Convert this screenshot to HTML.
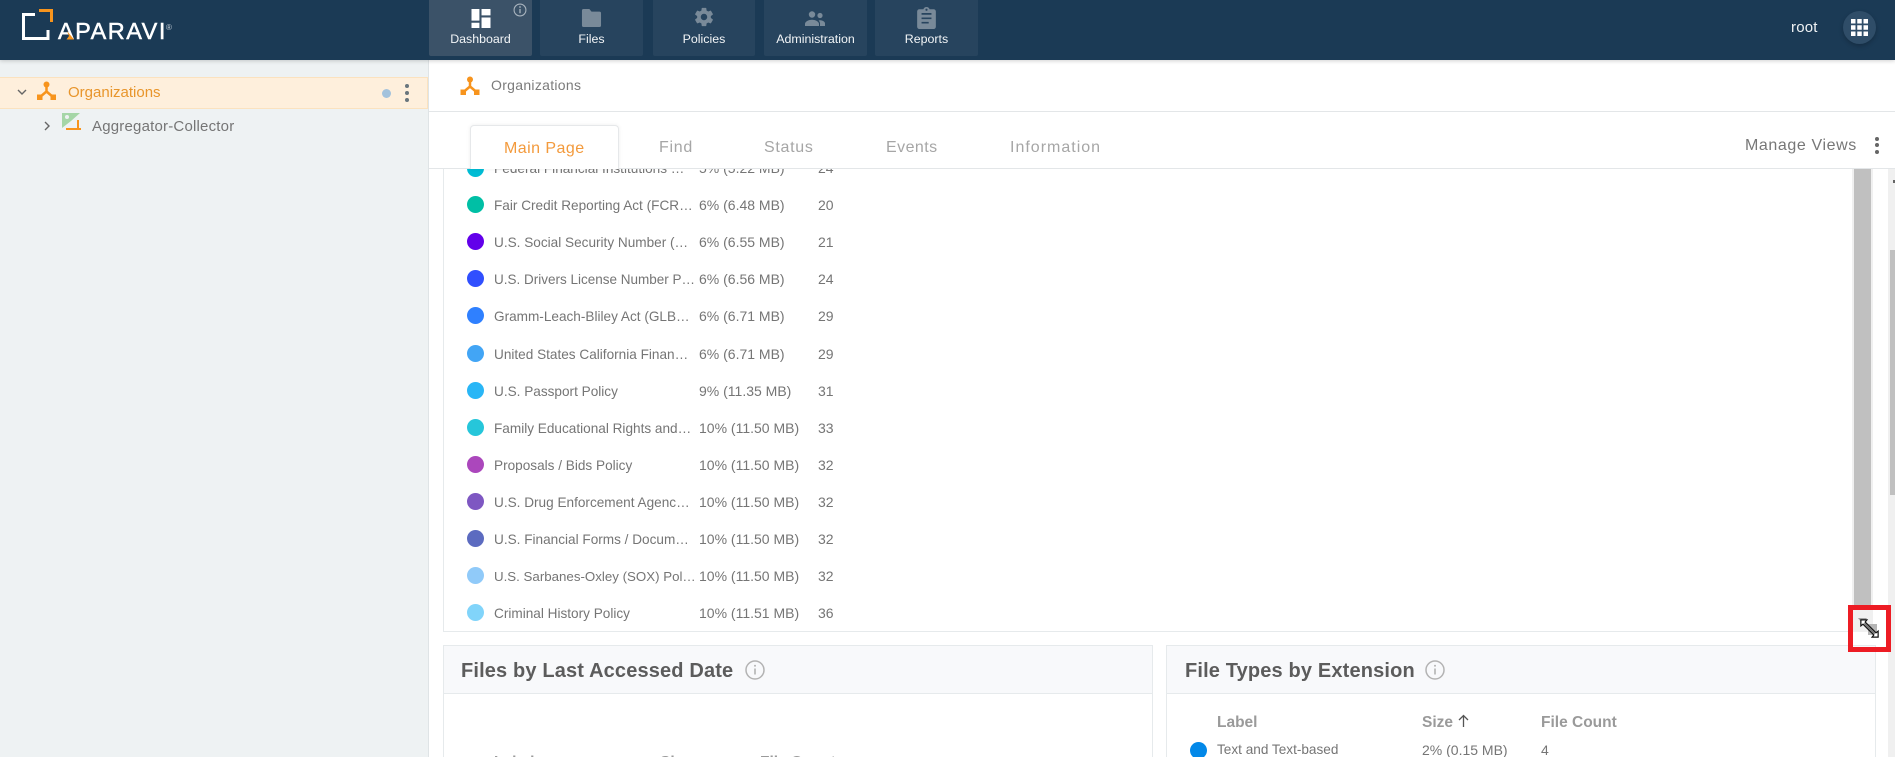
<!DOCTYPE html>
<html><head><meta charset="utf-8"><title>Aparavi</title>
<style>
html,body{margin:0;padding:0;width:1895px;height:757px;overflow:hidden;background:#fff;font-family:"Liberation Sans",sans-serif}
#root{position:relative;width:1895px;height:757px;overflow:hidden;background:#fff}
#root div,#root svg{position:absolute}
.t{white-space:nowrap;height:20px;line-height:20px}
.nav{top:0;height:56px;background:#27445e;border-radius:0 0 2px 2px}
.nl{top:29px;left:0;width:100%;text-align:center;color:#f2f5f7;font-size:12.4px;line-height:20px}
.r{font-size:14px;color:#757575}
.l{font-size:13.6px;margin-top:1px}
.dot{left:466.5px;width:17px;height:17px;border-radius:50%}
.tab{font-size:16px;color:#a6a6a6;letter-spacing:.7px}
.card{background:#fff;border:1px solid #e6eaec;box-sizing:border-box}
.ch{left:0;top:0;right:0;height:47px;background:#f8f9fb;border-bottom:1px solid #e6eaec}
.ct{font-size:20px;font-weight:bold;color:#5c5c5c;letter-spacing:.15px}
.th{font-size:15.5px;font-weight:bold;color:#9a9a9a}
</style></head><body><div id="root">

<!-- Sidebar -->
<div style="left:0;top:60px;width:428px;height:697px;background:#eef2f3;border-right:1px solid #dfe4e6"></div>
<div style="left:0;top:77px;width:428px;height:32px;box-sizing:border-box;background:#feefdc;border-top:1px solid #fbe2bf;border-bottom:1px solid #fbe2bf;border-right:1px solid #fbe2bf"></div>
<svg style="left:16px;top:88px" width="12" height="9" viewBox="0 0 12 9"><path d="M2 2l4 4 4-4" fill="none" stroke="#666" stroke-width="1.4"/></svg>
<svg style="left:37px;top:81px" width="20" height="20" viewBox="0 0 20 20"><circle cx="9.500" cy="3.500" r="3" fill="#f7941d"/><path d="M9.500 5v5.500L3 16M9.500 10.500L16 16" fill="none" stroke="#f7941d" stroke-width="2.500"/><rect x="0" y="13.500" width="5.500" height="5.500" fill="#f7941d"/><rect x="13.500" y="13.500" width="5.500" height="5.500" fill="#f7941d"/></svg>
<div class="t" style="left:68px;top:83px;font-size:15px;color:#e8952b">Organizations</div>
<div style="left:382px;top:89px;width:9px;height:9px;border-radius:50%;background:#a3c2dc"></div>
<div style="left:405px;top:84px;width:4px;height:4px;border-radius:50%;background:#69757d"></div>
<div style="left:405px;top:91px;width:4px;height:4px;border-radius:50%;background:#69757d"></div>
<div style="left:405px;top:98px;width:4px;height:4px;border-radius:50%;background:#69757d"></div>
<svg style="left:43px;top:120px" width="9" height="12" viewBox="0 0 9 12"><path d="M2 2l4 4-4 4" fill="none" stroke="#666" stroke-width="1.4"/></svg>
<svg style="left:62px;top:112px" width="20" height="19" viewBox="0 0 20 19"><path d="M0 1h18L9 9 0 16z" fill="#a5d6a7"/><circle cx="5" cy="5" r="2" fill="#eef2f3"/><path d="M4 17h15M16 8v9" stroke="#f7941d" stroke-width="2" fill="none"/></svg>
<div class="t" style="left:92px;top:117px;font-size:15px;color:#757575;letter-spacing:.2px">Aggregator-Collector</div>

<!-- Header -->
<div style="left:0;top:0;width:1895px;height:60px;background:#1b3a55;box-shadow:0 1px 4px rgba(0,0,0,.18)"></div>
<svg style="left:20px;top:8px" width="36" height="34" viewBox="0 0 36 34"><path d="M15 6.500H3.500V30.500H28V22" fill="none" stroke="#fff" stroke-width="3"/><path d="M19 2.500H31.500V14" fill="none" stroke="#f7941d" stroke-width="3"/></svg>
<div class="t" style="left:58px;top:19px;height:24px;line-height:24px;font-size:23.5px;color:#fff;letter-spacing:1.5px;-webkit-text-stroke:.5px #fff">APARAVI</div>
<svg style="left:58px;top:26px" width="20" height="16" viewBox="0 0 20 16"><path d="M9 5L16 13.500H8.500L11 10z" fill="#f7941d"/></svg>
<div class="t" style="left:166px;top:22px;font-size:8px;color:#c9d2da;line-height:12px;height:12px">®</div>

<div class="nav" style="left:429px;width:103px;background:#3b5268"><div class="nl">Dashboard</div></div>
<svg style="left:471px;top:9px" width="20" height="19" viewBox="0 0 18 18"><path d="M0 0h7.500v11H0zM0 13h7.500v5H0zM9.500 0H18v6H9.500zM9.500 8H18v10H9.500z" fill="#fff"/></svg>
<svg style="left:513px;top:3px" width="14" height="14" viewBox="0 0 13 13"><circle cx="6.500" cy="6.500" r="5.500" fill="none" stroke="#aab5bf" stroke-width="1"/><path d="M6.500 5.500v4" stroke="#aab5bf" stroke-width="1.200"/><circle cx="6.500" cy="3.700" r=".8" fill="#aab5bf"/></svg>

<div class="nav" style="left:540px;width:103px"><div class="nl">Files</div></div>
<svg style="left:581px;top:9px" width="21" height="18" viewBox="0 0 18 17"><path d="M1.500 0H7l2 2.500h7.500A1.500 1.500 0 0 1 18 4v11.500a1.500 1.500 0 0 1-1.500 1.500h-15A1.500 1.500 0 0 1 0 15.500V1.500A1.500 1.500 0 0 1 1.500 0z" fill="#798a99"/></svg>

<div class="nav" style="left:653px;width:102px"><div class="nl">Policies</div></div>
<svg style="left:693px;top:6px" width="22" height="22" viewBox="0 0 24 24"><path fill="#798a99" d="M19.430 12.980c.04-.32.07-.64.07-.98s-.03-.66-.07-.98l2.110-1.650c.19-.15.24-.42.12-.64l-2-3.460c-.12-.22-.39-.3-.61-.22l-2.490 1c-.52-.4-1.080-.73-1.690-.98l-.38-2.650C14.460 2.180 14.250 2 14 2h-4c-.25 0-.46.18-.49.420l-.38 2.650c-.61.25-1.170.59-1.690.98l-2.490-1c-.23-.09-.49 0-.61.22l-2 3.460c-.13.220-.07.490.12.640l2.110 1.650c-.04.320-.07.650-.07.980s.03.660.07.980l-2.110 1.650c-.19.150-.24.420-.12.640l2 3.460c.12.220.39.300.61.220l2.490-1c.52.400 1.080.730 1.690.980l.38 2.650c.03.240.24.420.49.420h4c.25 0 .46-.18.49-.42l.38-2.650c.61-.25 1.170-.59 1.690-.98l2.490 1c.23.090.49 0 .61-.22l2-3.460c.12-.22.07-.49-.12-.64l-2.110-1.650zM12 15.500c-1.930 0-3.500-1.570-3.500-3.500s1.570-3.500 3.500-3.500 3.500 1.570 3.500 3.500-1.570 3.500-3.500 3.500z"/></svg>

<div class="nav" style="left:764px;width:103px"><div class="nl">Administration</div></div>
<svg style="left:804px;top:11px" width="22" height="15" viewBox="0 0 20 15"><circle cx="7" cy="3.500" r="3.200" fill="#798a99"/><circle cx="15" cy="4.500" r="2.600" fill="#798a99"/><path d="M0 15v-2c0-2.500 4-4.200 7-4.200s7 1.700 7 4.200v2zM15 15v-2.500c0-1.300-.6-2.300-1.500-3 .5-.1 1-.2 1.500-.2 2.300 0 5 1.300 5 3.200V15z" fill="#798a99"/></svg>

<div class="nav" style="left:875px;width:103px"><div class="nl">Reports</div></div>
<svg style="left:917px;top:7px" width="19" height="22" viewBox="0 0 17 20"><path fill="#798a99" fill-rule="evenodd" d="M2 2h3.700C6 .9 7.100 0 8.500 0s2.500.9 2.800 2H15a2 2 0 0 1 2 2v14a2 2 0 0 1-2 2H2a2 2 0 0 1-2-2V4a2 2 0 0 1 2-2zM7.500 2.500a1 1 0 1 0 2 0 1 1 0 0 0-2 0zM4 7h9V5.500H4zM4 11h9V9.500H4zM4 15h6.500v-1.500H4z"/></svg>

<div class="t" style="left:1791px;top:18px;font-size:15px;color:#f0f3f5;letter-spacing:.2px">root</div>
<div style="left:1843px;top:11px;width:33px;height:33px;border-radius:50%;background:#2f4d68;box-shadow:0 2px 5px rgba(0,0,0,.22)"></div>
<svg style="left:1851px;top:19px" width="17" height="17" viewBox="0 0 17 17"><path fill="#fff" d="M0 0h4.500v4.500H0zM6.250 0h4.500v4.500h-4.500zM12.500 0H17v4.500h-4.500zM0 6.250h4.500v4.500H0zM6.250 6.250h4.500v4.500h-4.500zM12.500 6.250H17v4.500h-4.500zM0 12.500h4.500V17H0zM6.250 12.500h4.500V17h-4.500zM12.500 12.500H17V17h-4.500z"/></svg>

<!-- Breadcrumb -->
<div style="left:429px;top:111px;width:1466px;height:1px;background:#e3e6e8"></div>
<svg style="left:460px;top:76px" width="21" height="20" viewBox="0 0 20 20"><circle cx="9.500" cy="3.500" r="3" fill="#f7941d"/><path d="M9.500 5v5.500L3 16M9.500 10.500L16 16" fill="none" stroke="#f7941d" stroke-width="2.500"/><rect x="0" y="13.500" width="5.500" height="5.500" fill="#f7941d"/><rect x="13.500" y="13.500" width="5.500" height="5.500" fill="#f7941d"/></svg>
<div class="t" style="left:491px;top:75px;font-size:14px;color:#7b7b7b;letter-spacing:.3px">Organizations</div>

<!-- List card -->
<div style="left:443px;top:168px;width:1px;height:464px;background:#e6eaec"></div>
<div style="left:443px;top:631px;width:1431px;height:1px;background:#e6eaec"></div>

<div class="dot" style="top:160px;background:#00bcd4"></div>
<div class="t r l" style="left:494px;top:158px">Federal Financial Institutions …</div>
<div class="t r" style="left:699px;top:158px">5% (5.22 MB)</div>
<div class="t r" style="left:818px;top:158px">24</div>

<div class="dot" style="top:196px;background:#00bfa5"></div>
<div class="t r l" style="left:494px;top:195px">Fair Credit Reporting Act (FCR…</div>
<div class="t r" style="left:699px;top:195px">6% (6.48 MB)</div>
<div class="t r" style="left:818px;top:195px">20</div>

<div class="dot" style="top:233px;background:#6200ea"></div>
<div class="t r l" style="left:494px;top:232px">U.S. Social Security Number (…</div>
<div class="t r" style="left:699px;top:232px">6% (6.55 MB)</div>
<div class="t r" style="left:818px;top:232px">21</div>

<div class="dot" style="top:270px;background:#304ffe"></div>
<div class="t r l" style="left:494px;top:269px;font-size:13.5px">U.S. Drivers License Number P…</div>
<div class="t r" style="left:699px;top:269px">6% (6.56 MB)</div>
<div class="t r" style="left:818px;top:269px">24</div>

<div class="dot" style="top:307px;background:#2f80ff"></div>
<div class="t r l" style="left:494px;top:306px">Gramm-Leach-Bliley Act (GLB…</div>
<div class="t r" style="left:699px;top:306px">6% (6.71 MB)</div>
<div class="t r" style="left:818px;top:306px">29</div>

<div class="dot" style="top:345px;background:#42a5f5"></div>
<div class="t r l" style="left:494px;top:344px">United States California Finan…</div>
<div class="t r" style="left:699px;top:344px">6% (6.71 MB)</div>
<div class="t r" style="left:818px;top:344px">29</div>

<div class="dot" style="top:382px;background:#29b6f6"></div>
<div class="t r l" style="left:494px;top:381px">U.S. Passport Policy</div>
<div class="t r" style="left:699px;top:381px">9% (11.35 MB)</div>
<div class="t r" style="left:818px;top:381px">31</div>

<div class="dot" style="top:419px;background:#26c6da"></div>
<div class="t r l" style="left:494px;top:418px">Family Educational Rights and…</div>
<div class="t r" style="left:699px;top:418px">10% (11.50 MB)</div>
<div class="t r" style="left:818px;top:418px">33</div>

<div class="dot" style="top:456px;background:#ab47bc"></div>
<div class="t r l" style="left:494px;top:455px">Proposals / Bids Policy</div>
<div class="t r" style="left:699px;top:455px">10% (11.50 MB)</div>
<div class="t r" style="left:818px;top:455px">32</div>

<div class="dot" style="top:493px;background:#7e57c2"></div>
<div class="t r l" style="left:494px;top:492px">U.S. Drug Enforcement Agenc…</div>
<div class="t r" style="left:699px;top:492px">10% (11.50 MB)</div>
<div class="t r" style="left:818px;top:492px">32</div>

<div class="dot" style="top:530px;background:#5c6bc0"></div>
<div class="t r l" style="left:494px;top:529px">U.S. Financial Forms / Docum…</div>
<div class="t r" style="left:699px;top:529px">10% (11.50 MB)</div>
<div class="t r" style="left:818px;top:529px">32</div>

<div class="dot" style="top:567px;background:#90caf9"></div>
<div class="t r l" style="left:494px;top:566px;font-size:13.3px">U.S. Sarbanes-Oxley (SOX) Pol…</div>
<div class="t r" style="left:699px;top:566px">10% (11.50 MB)</div>
<div class="t r" style="left:818px;top:566px">32</div>

<div class="dot" style="top:604px;background:#81d4fa"></div>
<div class="t r l" style="left:494px;top:603px">Criminal History Policy</div>
<div class="t r" style="left:699px;top:603px">10% (11.51 MB)</div>
<div class="t r" style="left:818px;top:603px">36</div>

<!-- Tabs (cover) -->
<div style="left:429px;top:112px;width:1466px;height:56px;background:#fff"></div>
<div style="left:429px;top:168px;width:1466px;height:1px;background:#e3e6e8"></div>
<div style="left:470px;top:125px;width:149px;height:44px;box-sizing:border-box;background:#fff;border:1px solid #e6e8ea;border-bottom:0;border-radius:4px 4px 0 0;box-shadow:0 0 4px rgba(0,0,0,.07)"></div>
<div class="t tab" style="left:504px;top:139px;color:#f39a3c;letter-spacing:.45px">Main Page</div>
<div class="t tab" style="left:659px;top:138px">Find</div>
<div class="t tab" style="left:764px;top:138px">Status</div>
<div class="t tab" style="left:886px;top:138px;letter-spacing:.45px">Events</div>
<div class="t tab" style="left:1010px;top:138px;letter-spacing:1px">Information</div>
<div class="t tab" style="left:1745px;top:136px;color:#777;letter-spacing:.6px">Manage Views</div>
<div style="left:1875px;top:137px;width:4px;height:4px;border-radius:50%;background:#666"></div>
<div style="left:1875px;top:143px;width:4px;height:4px;border-radius:50%;background:#666"></div>
<div style="left:1875px;top:150px;width:4px;height:4px;border-radius:50%;background:#666"></div>

<!-- Inner scrollbar -->
<div style="left:1852px;top:169px;width:21px;height:463px;background:#f0f0f0"></div>
<div style="left:1854px;top:169px;width:17px;height:441px;background:#c0c0c0"></div>
<svg style="left:1858px;top:618px" width="9" height="6" viewBox="0 0 9 6"><path d="M0 0h9L4.500 6z" fill="#a3a3a3"/></svg>
<div style="left:1868px;top:624px;width:9px;height:11px;background:#b5b5b5"></div>

<!-- Outer scrollbar -->
<div style="left:1888px;top:169px;width:7px;height:588px;background:#f0f0f0"></div>
<div style="left:1890px;top:250px;width:5px;height:245px;background:#c0c0c0"></div>
<div style="left:1893px;top:180px;width:2px;height:3px;background:#666"></div>

<!-- Cards -->
<div class="card" style="left:443px;top:645px;width:710px;height:130px"><div class="ch"></div></div>
<div class="t ct" style="left:461px;top:661px">Files by Last Accessed Date</div>
<svg style="left:745px;top:660px" width="20" height="20" viewBox="0 0 20 20"><circle cx="10" cy="10" r="9" fill="none" stroke="#b3b3b3" stroke-width="1.500"/><path d="M10 8.500v6" stroke="#b3b3b3" stroke-width="1.600"/><circle cx="10" cy="5.800" r="1" fill="#b3b3b3"/></svg>
<div class="t th" style="left:494px;top:753px">Label</div>
<div class="t th" style="left:660px;top:753px">Size</div>
<div class="t th" style="left:760px;top:753px">File Count</div>

<div class="card" style="left:1166px;top:645px;width:710px;height:130px"><div class="ch"></div></div>
<div class="t ct" style="left:1185px;top:661px">File Types by Extension</div>
<svg style="left:1425px;top:660px" width="20" height="20" viewBox="0 0 20 20"><circle cx="10" cy="10" r="9" fill="none" stroke="#b3b3b3" stroke-width="1.500"/><path d="M10 8.500v6" stroke="#b3b3b3" stroke-width="1.600"/><circle cx="10" cy="5.800" r="1" fill="#b3b3b3"/></svg>
<div class="t th" style="left:1217px;top:713px">Label</div>
<div class="t th" style="left:1422px;top:713px">Size</div>
<svg style="left:1457px;top:714px" width="13" height="14" viewBox="0 0 13 14"><path d="M6.500 13V2M2 6l4.500-4.500L11 6" fill="none" stroke="#555" stroke-width="1.300"/></svg>
<div class="t th" style="left:1541px;top:713px">File Count</div>
<div class="dot" style="left:1190px;top:742px;background:#0288e8"></div>
<div class="t r" style="left:1217px;top:740px;font-size:13.6px">Text and Text-based</div>
<div class="t r" style="left:1422px;top:740px">2% (0.15 MB)</div>
<div class="t r" style="left:1541px;top:740px">4</div>

<!-- Red annotation box with cursor -->
<div style="left:1848px;top:605px;width:43px;height:47px;box-sizing:border-box;border:5px solid #ed1c24"></div>
<svg style="left:1860px;top:619px" width="19" height="19" viewBox="0 0 22 22"><path d="M1 1h7L6 3.500 18.500 16 21 14v7h-7l2-2.500L3.500 6 1 8z" fill="#fff" stroke="#111" stroke-width="1.400"/><path d="M5 5l12 12" stroke="#777" stroke-width="2"/></svg>
</div></body></html>
